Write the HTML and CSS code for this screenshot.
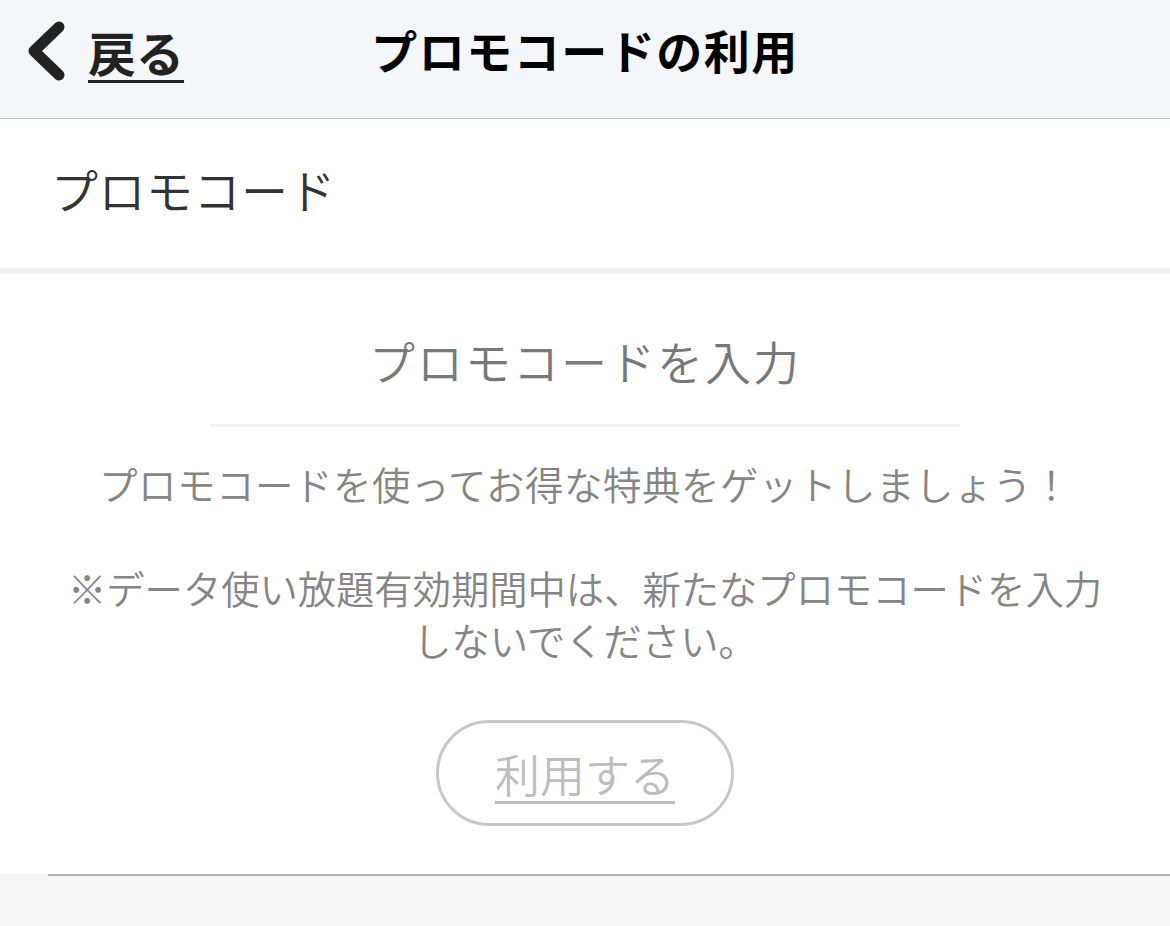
FILE: index.html
```html
<!DOCTYPE html>
<html lang="ja">
<head>
    <meta charset="UTF-8">
    <meta name="viewport" content="width=device-width, initial-scale=1.0">
    <title>プロモコードの利用</title>
    <link rel="stylesheet" href="styles.css">
</head>
<body>
    <header class="nav">
        <a class="back" href="#">
            <svg class="back-icon" viewBox="0 0 40 60">
                <path d="M33 6 L8 30 L33 54"/>
            </svg>
            <span class="back-text">戻る</span>
        </a>
        <h1 class="nav-title">プロモコードの利用</h1>
        <div></div>
    </header>

    <div class="section-row">プロモコード</div>
    <div class="spacer"></div>

    <main class="promo">
        <div class="promo-input">プロモコードを入力</div>
        <div class="promo-line"></div>
        <p class="promo-desc">プロモコードを使ってお得な特典をゲットしましょう！</p>
        <p class="promo-note">※データ使い放題有効期間中は、新たなプロモコードを入力しないでください。</p>
        <button class="promo-btn" disabled><span>利用する</span></button>
    </main>

    <div class="footer-area"></div>
</body>
</html>
```

FILE: styles.css
```css
* {
    margin: 0;
    padding: 0;
    box-sizing: border-box;
}

body {
    font-family: "Noto Sans CJK JP", "Noto Sans", sans-serif;
    background: #ffffff;
    color: #333;
    width: 1170px;
    min-height: 926px;
    overflow: hidden;
}

.nav {
    height: 119px;
    background: #f5f6fa;
    border-bottom: 1px solid #c2c2c6;
    display: grid;
    grid-template-columns: 1fr auto 1fr;
    align-items: center;
    padding-bottom: 16px;
}

.back {
    display: flex;
    align-items: center;
    gap: 22px;
    padding-left: 26px;
    color: #222;
    text-decoration: none;
}

.back-icon {
    width: 40px;
    height: 60px;
    fill: none;
    stroke: #222;
    stroke-width: 11;
    stroke-linecap: round;
    stroke-linejoin: round;
}

.back-text {
    font-size: 48px;
    font-weight: 700;
    line-height: 1;
    text-decoration: underline;
    text-decoration-thickness: 3px;
    text-underline-offset: 8px;
}

.nav-title {
    font-size: 46px;
    font-weight: 700;
    color: #000;
    letter-spacing: 1.5px;
    margin-top: -4px;
}

.section-row {
    height: 149px;
    display: flex;
    align-items: center;
    padding-left: 51px;
    font-size: 47px;
    font-weight: 350;
    color: #333;
    letter-spacing: 0.5px;
    padding-bottom: 10px;
}

.spacer {
    height: 6px;
    background: #f2f2f2;
}

.promo {
    display: flex;
    flex-direction: column;
    align-items: center;
    padding-top: 56px;
    text-align: center;
    font-weight: 350;
}

.promo-input {
    font-size: 46px;
    line-height: 60px;
    color: #78787c;
    letter-spacing: 2px;
}

.promo-line {
    width: 750px;
    height: 3px;
    background: #f2f2f2;
    margin-top: 34px;
}

.promo-desc {
    font-size: 38.5px;
    line-height: 52px;
    color: #858585;
    letter-spacing: 0.5px;
    margin-top: 30px;
}

.promo-note {
    font-size: 38.3px;
    line-height: 52px;
    color: #858585;
    margin-top: 53px;
    padding: 0 60px;
}

.promo-btn {
    width: 298px;
    height: 106px;
    margin-top: 54px;
    border: 3px solid #c8c8c8;
    border-radius: 53px;
    background: #fff;
    font-family: inherit;
    font-weight: 350;
    font-size: 45px;
    color: #bdbdbd;
    display: flex;
    align-items: center;
    justify-content: center;
}

.promo-btn span {
    text-decoration: underline;
    text-decoration-thickness: 3px;
    text-underline-offset: 8px;
}

.footer-area {
    margin-top: 48px;
    height: 60px;
    background: #f6f6f6;
    border-top: 2px solid #b0b0b0;
    margin-left: 48px;
    position: relative;
}

.footer-area::before {
    content: "";
    position: absolute;
    left: -48px;
    top: -2px;
    width: 48px;
    height: 60px;
    background: #f6f6f6;
}
```
